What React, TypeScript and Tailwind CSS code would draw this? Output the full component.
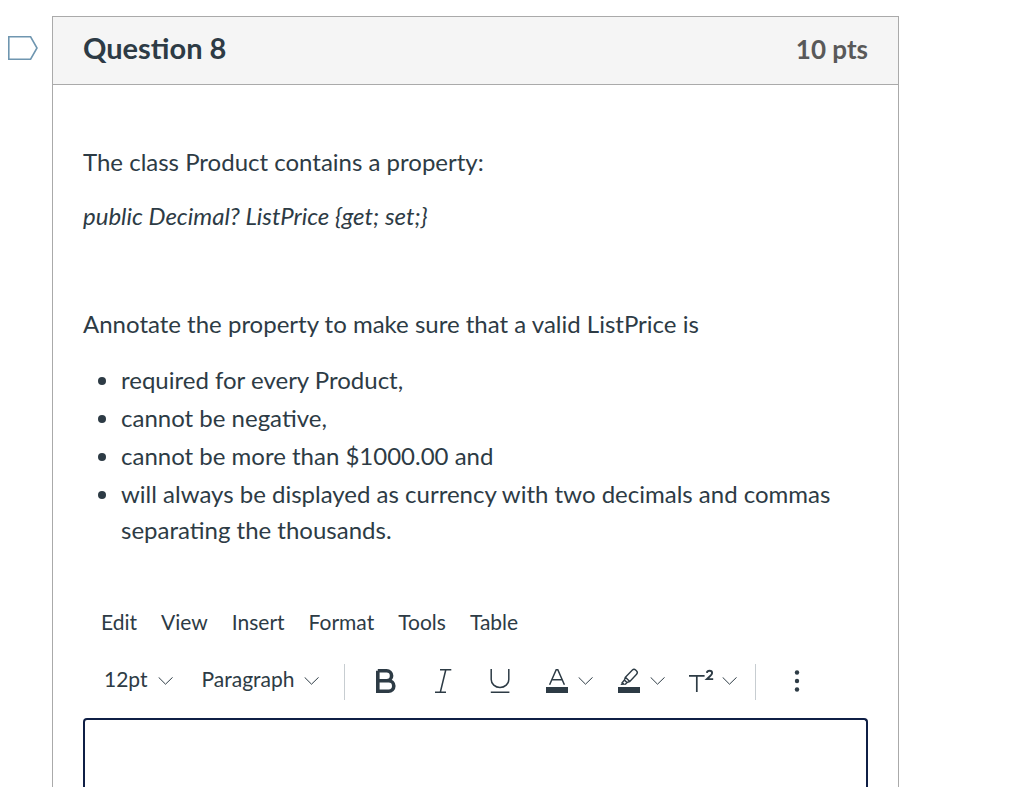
import type { ReactNode } from 'react'

const MENUS = ['Edit', 'View', 'Insert', 'Format', 'Tools', 'Table']

const REQUIREMENTS = [
  'required for every Product,',
  'cannot be negative,',
  'cannot be more than $1000.00 and',
  'will always be displayed as currency with two decimals and commas separating the thousands.',
]

function Chevron() {
  return (
    <svg className="w-4 h-2 shrink-0" viewBox="0 0 16 8" fill="none" stroke="currentColor" strokeWidth="1">
      <path d="M0.6 0.3 7.5 7.2 14.6 0.3" />
    </svg>
  )
}

function Icon({ children }: { children: ReactNode }) {
  return (
    <svg className="size-6 shrink-0 overflow-visible" viewBox="0 0 24 24" fill="none" stroke="currentColor" strokeWidth="1.5">
      {children}
    </svg>
  )
}

function ToolSelect({ label, value }: { label: string; value: string }) {
  return (
    <span className="relative flex items-center">
      <select
        aria-label={label}
        className="appearance-none field-sizing-content bg-transparent pr-[26px] pb-1 text-[21px] leading-8 outline-none"
      >
        <option>{value}</option>
      </select>
      <span className="absolute right-0 pointer-events-none">
        <Chevron />
      </span>
    </span>
  )
}

function ToolButton({ label, menu, children }: { label: string; menu?: boolean; children: ReactNode }) {
  return (
    <button type="button" aria-label={label} className="flex items-center gap-[9px]">
      <Icon>{children}</Icon>
      {menu && <Chevron />}
    </button>
  )
}

function Toolbar() {
  return (
    <div role="toolbar" className="flex items-center h-9 pl-[21px] pb-0.5">
      <div className="flex gap-7">
        <ToolSelect label="Font size" value="12pt" />
        <ToolSelect label="Block style" value="Paragraph" />
      </div>
      <div className="self-start w-px h-9 ml-6 mr-[29px] bg-[#c7cdd1]" />
      <div className="flex gap-[33px]">
        <ToolButton label="Bold">
          <path
            strokeWidth="3.6"
            d="M3.8 1.8H12.6a5 5 0 0 1 0 10H3.8M13 11.8H14.6a5.2 5.2 0 0 1 0 10.4H3.8V1.8"
          />
        </ToolButton>
        <ToolButton label="Italic">
          <path d="M9 0.8H20.3M4 23.2H15M14.8 0.8 9.3 23.2" />
        </ToolButton>
        <ToolButton label="Underline">
          <path d="M3.2 0V10.5a8.8 8 0 0 0 17.6 0V0M2.8 23.2H21.4" />
        </ToolButton>
        <div className="flex gap-[23px]">
          <ToolButton label="Text color" menu>
            <path d="M4.6 15.8 11.2 0.8H12.8L19.4 15.8M7 10.8H17" />
            <path d="M1 18H23V24H1z" fill="currentColor" stroke="none" />
          </ToolButton>
          <ToolButton label="Highlight color" menu>
            <path
              strokeWidth="1.4"
              d="M8.4 8.2 15.4 1.1Q17 -0.4 18.6 1.1L19.6 2.1Q21.1 3.6 19.6 5.2L12.8 12.4zM8.4 8.2 7.4 11 10 13.6 12.8 12.4M7.4 11 4.6 14.4M10 13.6 8.2 15.4"
            />
            <path d="M5.6 13 8.6 15.8 3.4 16z" fill="currentColor" stroke="none" />
            <path d="M1 18H23V24H1z" fill="currentColor" stroke="none" />
          </ToolButton>
          <ToolButton label="Superscript and subscript" menu>
            <path d="M0 6.8H15.6M7.8 6.8V23" strokeWidth="1.7" />
            <path d="M17.9 3.8Q18.2 1.8 20.5 1.8 23.1 1.8 23.1 4 23.1 5.4 21.2 7L17.9 10.1H24.2" strokeWidth="1.9" />
          </ToolButton>
        </div>
      </div>
      <div className="self-start w-px h-9 ml-[17px] mr-[29px] bg-[#c7cdd1]" />
      <ToolButton label="More">
        <g fill="currentColor" stroke="none">
          <circle cx="12" cy="3.5" r="2.2" />
          <circle cx="12" cy="12" r="2.2" />
          <circle cx="12" cy="20.5" r="2.2" />
        </g>
      </ToolButton>
    </div>
  )
}

export default function App() {
  return (
    <main className="flex items-stretch min-h-screen pt-4 pl-2 pr-[117px] bg-white font-[Lato,sans-serif] text-2xl leading-9 text-[#2d3b45]">
      <button type="button" aria-label="Flag question" className="self-start w-[30px] mt-5 mr-3.5">
        <svg className="block w-[30px] h-6" viewBox="0 0 30 24" fill="none" stroke="#6f96b0" strokeWidth="1.6">
          <path d="M0.8 0.8H22.6L29 12 22.6 23.2H0.8z" />
        </svg>
      </button>

      <section className="flex flex-col flex-1 min-w-0 border border-b-0 border-[#aaaaaa]">
        <header className="flex items-baseline justify-between px-[30px] pt-4 pb-[21px] border-b border-[#aaaaaa] bg-[#f5f5f5] font-bold">
          <h1 className="text-[29px] leading-[30px]">Question 8</h1>
          <span className="text-[26px] leading-[26px] text-[#595959]">10 pts</span>
        </header>

        <div className="flex flex-col flex-1 px-[30px] pt-[59px]">
          <p>The class Product contains a property:</p>
          <p className="mt-[18px] italic">public Decimal? ListPrice {'{get; set;}'}</p>
          <p className="mt-[72px]">Annotate the property to make sure that a valid ListPrice is</p>
          <ul className="mt-5 pl-[38px] space-y-0.5 list-disc">
            {REQUIREMENTS.map((item) => (
              <li key={item}>{item}</li>
            ))}
          </ul>

          <div role="menubar" className="flex gap-6 mt-[58px] pl-[18px] text-[21px] leading-8">
            {MENUS.map((name) => (
              <button key={name} type="button" role="menuitem">
                {name}
              </button>
            ))}
          </div>
          <div className="mt-[26px]">
            <Toolbar />
          </div>
          <textarea
            aria-label="Answer"
            className="flex-1 w-full min-h-16 mt-[18px] p-4 border-2 border-b-0 border-[#0f1f45] rounded-t-sm resize-none outline-none"
          />
        </div>
      </section>
    </main>
  )
}
